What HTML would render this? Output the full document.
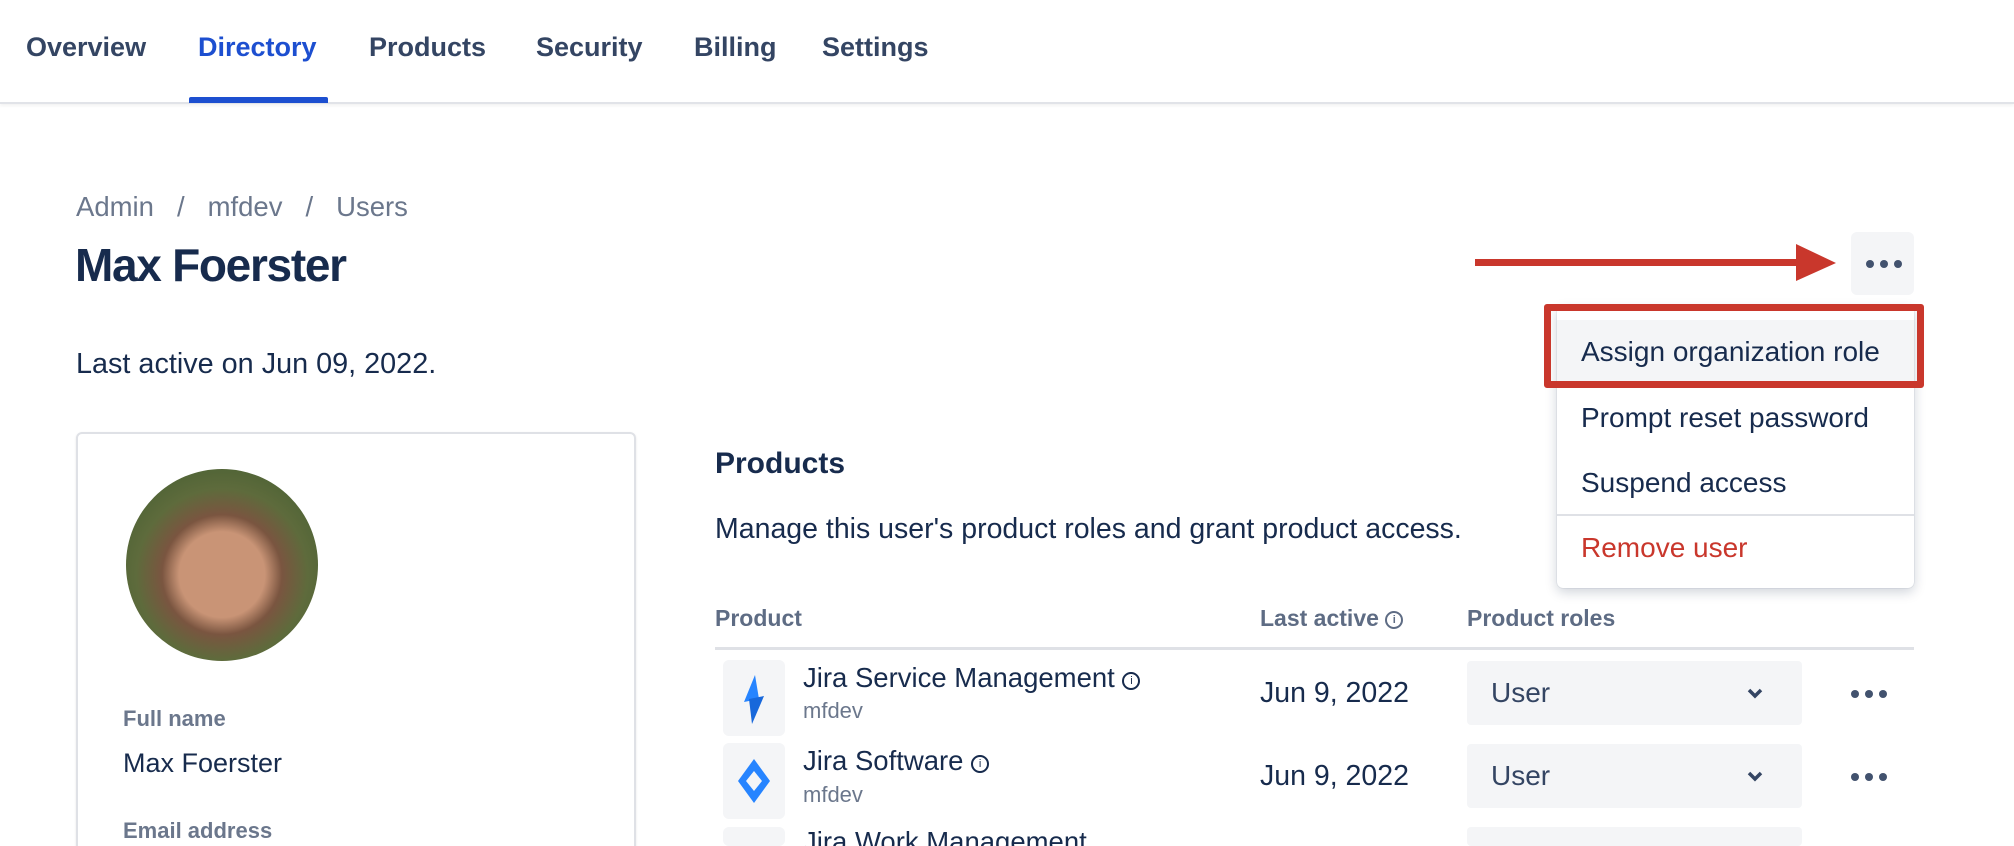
<!DOCTYPE html>
<html><head><meta charset="utf-8"><style>
*{margin:0;padding:0;box-sizing:border-box}
html{width:2014px;height:846px;overflow:hidden}
body{width:2014px;height:846px;overflow:hidden;background:#fff;font-family:"Liberation Sans",sans-serif;color:#172b4d;position:relative}
.a{position:absolute;white-space:nowrap}
.nav{position:absolute;left:0;top:0;width:2014px;height:104px;border-bottom:2px solid #e1e3e8;box-shadow:0 2px 3px rgba(0,0,0,.05)}
.nav span{position:absolute;top:32px;font-size:27px;font-weight:bold;color:#344563}
.m{font-size:28px}
.dots{display:flex;gap:6px}
.dots i{width:8px;height:8px;border-radius:50%;background:#42526e;display:block}
.sel{position:absolute;left:1467px;width:335px;height:64px;background:#f4f5f7;border-radius:4px}
.ib{position:absolute;left:723px;width:62px;height:76px;background:#f4f5f7;border-radius:6px}
.sl{margin:0 23px}
.inf{display:inline-block;width:18px;height:18px;border:2px solid currentColor;border-radius:50%;font-size:11px;text-align:center;line-height:14px;vertical-align:3px}
</style></head><body>
<div class="nav">
<span style="left:26px">Overview</span>
<span style="left:198px;color:#1d4fd0">Directory</span>
<span style="left:369px">Products</span>
<span style="left:536px">Security</span>
<span style="left:694px">Billing</span>
<span style="left:822px">Settings</span>
<div style="position:absolute;left:189px;top:97px;width:139px;height:6px;background:#1d4fd0;border-radius:2px 2px 0 0"></div>
</div>
<div class="a" style="left:76px;top:191px;font-size:27.5px;color:#6b778c">Admin<span class="sl">/</span>mfdev<span class="sl">/</span>Users</div>
<div class="a" style="left:75px;top:238px;font-size:46px;font-weight:bold;letter-spacing:-1.3px">Max Foerster</div>
<div class="a" style="left:76px;top:348px;font-size:28.8px">Last active on Jun 09, 2022.</div>

<div style="position:absolute;left:76px;top:432px;width:560px;height:450px;border:2px solid #dfe1e6;border-radius:6px;box-shadow:0 1px 2px rgba(0,0,0,.1)"></div>
<div style="position:absolute;left:126px;top:469px;width:192px;height:192px;border-radius:50%;background:radial-gradient(circle at 50% 55%,#c99476 0 30%,#7a5540 42%,#5e6b3c 60%,#3d5a2e 100%)"></div>
<div class="a" style="left:123px;top:706px;font-size:22px;font-weight:bold;color:#6b778c">Full name</div>
<div class="a" style="left:123px;top:748px;font-size:27px">Max Foerster</div>
<div class="a" style="left:123px;top:818px;font-size:22px;font-weight:bold;color:#6b778c">Email address</div>

<div class="a" style="left:715px;top:447px;font-size:30px;font-weight:bold">Products</div>
<div class="a" style="left:715px;top:513px;font-size:28.5px">Manage this user's product roles and grant product access.</div>
<div class="a" style="left:715px;top:605px;font-size:23px;font-weight:bold;color:#5e6c84">Product</div>
<div class="a" style="left:1260px;top:605px;font-size:23px;font-weight:bold;color:#5e6c84">Last active <span class="inf">i</span></div>
<div class="a" style="left:1467px;top:605px;font-size:23px;font-weight:bold;color:#5e6c84">Product roles</div>
<div style="position:absolute;left:715px;top:647px;width:1199px;height:3px;background:#dfe1e6"></div>

<div class="ib" style="top:660px"></div>
<svg class="a" style="left:734px;top:672px" width="40" height="54" viewBox="0 0 40 54"><path d="M21 3 L10 30 L25 27 Z" fill="#2684ff"/><path d="M15 27 L30 24 L18 52 Z" fill="#1868db"/></svg>
<div class="a" style="left:803px;top:662px;font-size:27.5px">Jira Service Management <span class="inf">i</span></div>
<div class="a" style="left:803px;top:698px;font-size:22px;color:#6b778c">mfdev</div>
<div class="a" style="left:1260px;top:677px;font-size:28.5px">Jun 9, 2022</div>
<div class="sel" style="top:661px"></div>
<div class="a" style="left:1491px;top:677px;font-size:28px;color:#344563">User</div>
<svg class="a" style="left:1745px;top:685px" width="20" height="16"><path d="M4 5 L10 11 L16 5" stroke="#344563" stroke-width="3.5" fill="none"/></svg>
<div class="a dots" style="left:1851px;top:690px"><i></i><i></i><i></i></div>

<div class="ib" style="top:743px"></div>
<svg class="a" style="left:734px;top:756px" width="40" height="50" viewBox="0 0 40 50"><path d="M20 3 L36 25 L20 47 L4 25 Z" fill="#2684ff"/><path d="M20 15 L28 25 L20 35 L12 25 Z" fill="#f4f5f7"/></svg>
<div class="a" style="left:803px;top:745px;font-size:27.5px">Jira Software <span class="inf">i</span></div>
<div class="a" style="left:803px;top:782px;font-size:22px;color:#6b778c">mfdev</div>
<div class="a" style="left:1260px;top:760px;font-size:28.5px">Jun 9, 2022</div>
<div class="sel" style="top:744px"></div>
<div class="a" style="left:1491px;top:760px;font-size:28px;color:#344563">User</div>
<svg class="a" style="left:1745px;top:768px" width="20" height="16"><path d="M4 5 L10 11 L16 5" stroke="#344563" stroke-width="3.5" fill="none"/></svg>
<div class="a dots" style="left:1851px;top:773px"><i></i><i></i><i></i></div>

<div class="ib" style="top:827px;height:19px"></div>
<div class="a" style="left:803px;top:826px;font-size:27.5px">Jira Work Management</div>
<div class="sel" style="top:827px;height:19px"></div>

<div style="position:absolute;left:1851px;top:232px;width:63px;height:63px;background:#f4f5f7;border-radius:6px"></div>
<div class="a dots" style="left:1866px;top:260px"><i></i><i></i><i></i></div>
<div style="position:absolute;left:1475px;top:259px;width:326px;height:7px;background:#c9372c"></div>
<svg class="a" style="left:1796px;top:244px" width="42" height="38"><path d="M0 0 L40 19 L0 37 Z" fill="#c9372c"/></svg>

<div style="position:absolute;left:1557px;top:306px;width:357px;height:282px;background:#fff;border-radius:6px;box-shadow:0 4px 12px rgba(9,30,66,.2),0 0 1px rgba(9,30,66,.3)"></div>
<div style="position:absolute;left:1557px;top:320px;width:357px;height:64px;background:#f4f5f7"></div>
<div class="a m" style="left:1581px;top:336px">Assign organization role</div>
<div class="a m" style="left:1581px;top:402px">Prompt reset password</div>
<div class="a m" style="left:1581px;top:467px">Suspend access</div>
<div style="position:absolute;left:1557px;top:514px;width:357px;height:2px;background:#dfe1e6"></div>
<div class="a m" style="left:1581px;top:532px;color:#c9372c">Remove user</div>
<div style="position:absolute;left:1544px;top:304px;width:380px;height:84px;border:7px solid #c9372c;border-radius:3px"></div>
</body></html>
